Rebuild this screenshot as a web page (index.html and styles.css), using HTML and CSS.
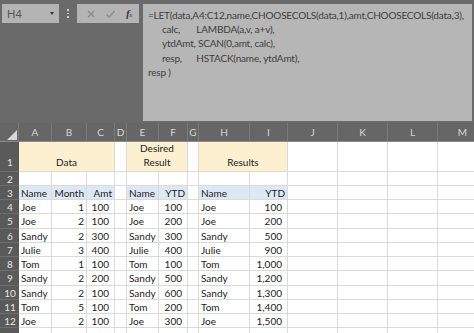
FILE: index.html
```html
<!DOCTYPE html>
<html>
<head>
  <meta charset="UTF-8">
  <title>LET / SCAN running total</title>
  <link rel="stylesheet" href="styles.css">
</head>
<body>
  <!-- name box + formula bar -->
  <div class="toolbar">
    <div class="namebox">
      <span>H4</span>
      <span class="caret"></span>
    </div>
    <div class="grip"><i></i><i></i><i></i></div>
    <div class="fxbtns">
      <svg width="10" height="10" viewBox="0 0 10 10"><path d="M2 2 L8 8 M8 2 L2 8" stroke="#8c8c8c" stroke-width="1.3" fill="none"/></svg>
      <svg width="11" height="10" viewBox="0 0 11 10"><path d="M1.5 5.5 L4.2 8 L9.5 2" stroke="#8c8c8c" stroke-width="1.3" fill="none"/></svg>
      <span class="fx">f<span class="x">x</span></span>
    </div>
    <div class="formula">
      <div>=LET(data,A4:C12,name,CHOOSECOLS(data,1),amt,CHOOSECOLS(data,3),</div>
      <div class="indent"><span class="var">calc,</span> LAMBDA(a,v, a+v),</div>
      <div class="indent"><span class="var">ytdAmt,</span> SCAN(0,amt, calc),</div>
      <div class="indent"><span class="var">resp,</span> HSTACK(name, ytdAmt),</div>
      <div>resp )</div>
    </div>
  </div>

  <!-- worksheet -->
  <div class="sheet">
    <div class="row colheads">
      <div class="corner"><span class="tri"></span></div>
      <div>A</div><div>B</div><div>C</div><div>D</div><div>E</div><div>F</div><div>G</div>
      <div>H</div><div>I</div><div>J</div><div>K</div><div>L</div><div>M</div>
    </div>

    <div class="row r1">
      <div class="rh">1</div>
      <div class="c title span3">Data</div>
      <div class="c"></div>
      <div class="c title span2">Desired<br>Result</div>
      <div class="c"></div>
      <div class="c title span2">Results</div>
      <div class="c"></div><div class="c"></div><div class="c"></div><div class="c"></div>
    </div>

    <div class="row">
      <div class="rh">2</div>
      <div class="c"></div><div class="c"></div><div class="c"></div><div class="c"></div><div class="c"></div>
      <div class="c"></div><div class="c"></div><div class="c"></div><div class="c"></div><div class="c"></div>
      <div class="c"></div><div class="c"></div><div class="c"></div>
    </div>

    <div class="row">
      <div class="rh">3</div>
      <div class="c hd">Name</div><div class="c hd num">Month</div><div class="c hd num">Amt</div>
      <div class="c"></div>
      <div class="c hd">Name</div><div class="c hd num">YTD</div>
      <div class="c"></div>
      <div class="c hd">Name</div><div class="c hd num">YTD</div>
      <div class="c"></div><div class="c"></div><div class="c"></div><div class="c"></div>
    </div>

    <div class="row">
      <div class="rh">4</div>
      <div class="c">Joe</div><div class="c num">1</div><div class="c amt">100</div><div class="c"></div>
      <div class="c">Joe</div><div class="c amt">100</div><div class="c"></div>
      <div class="c">Joe</div><div class="c amt">100</div>
      <div class="c"></div><div class="c"></div><div class="c"></div><div class="c"></div>
    </div>
    <div class="row">
      <div class="rh">5</div>
      <div class="c">Joe</div><div class="c num">2</div><div class="c amt">100</div><div class="c"></div>
      <div class="c">Joe</div><div class="c amt">200</div><div class="c"></div>
      <div class="c">Joe</div><div class="c amt">200</div>
      <div class="c"></div><div class="c"></div><div class="c"></div><div class="c"></div>
    </div>
    <div class="row">
      <div class="rh">6</div>
      <div class="c">Sandy</div><div class="c num">2</div><div class="c amt">300</div><div class="c"></div>
      <div class="c">Sandy</div><div class="c amt">300</div><div class="c"></div>
      <div class="c">Sandy</div><div class="c amt">500</div>
      <div class="c"></div><div class="c"></div><div class="c"></div><div class="c"></div>
    </div>
    <div class="row">
      <div class="rh">7</div>
      <div class="c">Julie</div><div class="c num">3</div><div class="c amt">400</div><div class="c"></div>
      <div class="c">Julie</div><div class="c amt">400</div><div class="c"></div>
      <div class="c">Julie</div><div class="c amt">900</div>
      <div class="c"></div><div class="c"></div><div class="c"></div><div class="c"></div>
    </div>
    <div class="row">
      <div class="rh">8</div>
      <div class="c">Tom</div><div class="c num">1</div><div class="c amt">100</div><div class="c"></div>
      <div class="c">Tom</div><div class="c amt">100</div><div class="c"></div>
      <div class="c">Tom</div><div class="c amt">1,000</div>
      <div class="c"></div><div class="c"></div><div class="c"></div><div class="c"></div>
    </div>
    <div class="row">
      <div class="rh">9</div>
      <div class="c">Sandy</div><div class="c num">2</div><div class="c amt">200</div><div class="c"></div>
      <div class="c">Sandy</div><div class="c amt">500</div><div class="c"></div>
      <div class="c">Sandy</div><div class="c amt">1,200</div>
      <div class="c"></div><div class="c"></div><div class="c"></div><div class="c"></div>
    </div>
    <div class="row">
      <div class="rh">10</div>
      <div class="c">Sandy</div><div class="c num">2</div><div class="c amt">100</div><div class="c"></div>
      <div class="c">Sandy</div><div class="c amt">600</div><div class="c"></div>
      <div class="c">Sandy</div><div class="c amt">1,300</div>
      <div class="c"></div><div class="c"></div><div class="c"></div><div class="c"></div>
    </div>
    <div class="row">
      <div class="rh">11</div>
      <div class="c">Tom</div><div class="c num">5</div><div class="c amt">100</div><div class="c"></div>
      <div class="c">Tom</div><div class="c amt">200</div><div class="c"></div>
      <div class="c">Tom</div><div class="c amt">1,400</div>
      <div class="c"></div><div class="c"></div><div class="c"></div><div class="c"></div>
    </div>
    <div class="row">
      <div class="rh">12</div>
      <div class="c">Joe</div><div class="c num">2</div><div class="c amt">100</div><div class="c"></div>
      <div class="c">Joe</div><div class="c amt">300</div><div class="c"></div>
      <div class="c">Joe</div><div class="c amt">1,500</div>
      <div class="c"></div><div class="c"></div><div class="c"></div><div class="c"></div>
    </div>
    <div class="row">
      <div class="rh"></div>
      <div class="c"></div><div class="c"></div><div class="c"></div><div class="c"></div><div class="c"></div>
      <div class="c"></div><div class="c"></div><div class="c"></div><div class="c"></div><div class="c"></div>
      <div class="c"></div><div class="c"></div><div class="c"></div>
    </div>
  </div>
</body>
</html>
```

FILE: styles.css
```css
html, body {
  margin: 0;
  padding: 0;
  overflow: hidden;
  background: #fff;
}

body {
  font-family: Lato, "Liberation Sans", sans-serif;
  font-size: 10px;
  color: #222;
  width: 474px;
}

/* formula bar area */
.toolbar {
  display: flex;
  align-items: flex-start;
  height: 123px;
  padding: 4px 0 0 2px;
  box-sizing: border-box;
  background: #6a6a6a;
}

.namebox {
  width: 57px;
  height: 19px;
  box-sizing: border-box;
  background: #b4b4b4;
  display: flex;
  align-items: center;
  justify-content: space-between;
  padding: 0 5px 0 5px;
  color: #555;
  font-size: 11px;
}

.caret {
  width: 0;
  height: 0;
  border-left: 2.5px solid transparent;
  border-right: 2.5px solid transparent;
  border-top: 3px solid #333;
}

.grip {
  width: 18px;
  height: 19px;
  display: flex;
  flex-direction: column;
  align-items: center;
  justify-content: center;
  gap: 2px;
}

.grip i {
  display: block;
  width: 1.5px;
  height: 1.5px;
  background: #d0d0d0;
}

.fxbtns {
  width: 62px;
  height: 19px;
  background: #b4b4b4;
  display: flex;
  align-items: center;
  justify-content: space-around;
  padding: 0 2px 0 4px;
  box-sizing: border-box;
}

.fx {
  font-family: "Liberation Serif", serif;
  font-style: italic;
  font-weight: bold;
  font-size: 10px;
  color: #333;
}

.fx .x {
  font-size: 6px;
  font-weight: normal;
}

.formula {
  margin-left: 4px;
  width: 329px;
  height: 117px;
  box-sizing: border-box;
  background: #b6b6b6;
  color: #3d3d3d;
  padding: 4px 0 0 5px;
  font-size: 10px;
  letter-spacing: -0.2px;
  line-height: 14.2px;
  white-space: nowrap;
  overflow: hidden;
}

.formula .indent {
  padding-left: 14px;
}

.formula .var {
  display: inline-block;
  min-width: 32px;
}

/* worksheet grid */
.row {
  display: grid;
  grid-template-columns: 19px 33px 35px 28px 12px 32px 29px 11px 51px 38px 50px 50px 50px 50px;
  height: 14.25px;
  line-height: 14px;
}

.row > div {
  box-sizing: border-box;
  overflow: hidden;
  white-space: nowrap;
}

.colheads {
  height: 19px;
  line-height: 19px;
  background: #666;
  color: #d6d6d6;
  border-bottom: 1px solid #8a8a8a;
  box-sizing: border-box;
}

.colheads > div {
  text-align: center;
  border-right: 1px solid #7a7a7a;
}

.corner {
  position: relative;
}

.tri {
  position: absolute;
  right: 1px;
  bottom: 1px;
  width: 0;
  height: 0;
  border-left: 10px solid transparent;
  border-bottom: 10px solid #d8d8d8;
}

.rh {
  background: #5a5a5a;
  color: #e4e4e4;
  text-align: center;
  padding-left: 1px;
  border-bottom: 1px solid #6e6e6e;
}

.c {
  border-right: 1px solid #dadada;
  border-bottom: 1px solid #dadada;
  padding: 0 2px;
}

.num {
  text-align: right;
}

.amt {
  text-align: right;
  padding-right: 5px;
}

.hd {
  background: #dde8f5;
}

.r1 {
  height: 29.5px;
  line-height: 14.5px;
}

.r1 .rh {
  display: flex;
  align-items: flex-end;
  justify-content: center;
  padding-bottom: 1px;
}

.title {
  background: #fdf0d0;
  display: flex;
  flex-direction: column;
  justify-content: flex-end;
  align-items: center;
  text-align: center;
  padding-bottom: 1px;
}

.span3 {
  grid-column: span 3;
}

.span2 {
  grid-column: span 2;
}
```
